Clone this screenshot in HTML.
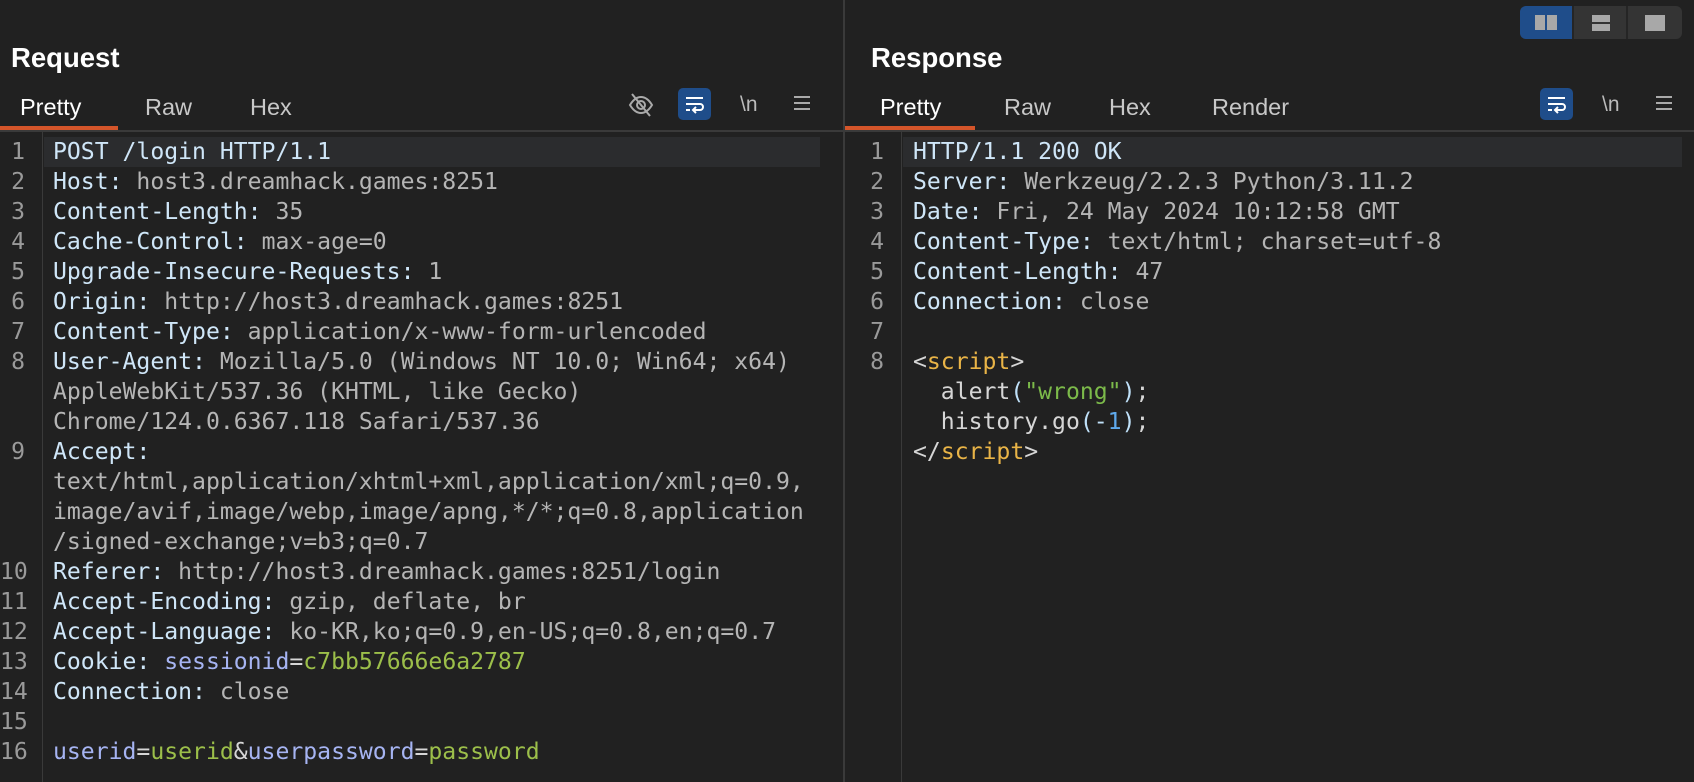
<!DOCTYPE html>
<html><head><meta charset="utf-8"><style>
*{margin:0;padding:0;box-sizing:border-box}
body{width:1694px;height:782px;background:#212121;position:relative;overflow:hidden;font-family:"Liberation Sans",sans-serif}
.a{position:absolute}
.h{font-weight:bold;color:#fff;font-size:27.5px;top:42px}
.tab{font-size:23.5px;color:#c8c8c8;top:94px}
.code{font-family:"DejaVu Sans Mono","Liberation Mono",monospace;font-size:23.1px;white-space:pre;line-height:30px}
.k{color:#cfe6f8}.v{color:#b5b5b5}.p{color:#a6b4f2}.g{color:#9cbf4a}.o{color:#e9b447}.w{color:#d6d6d6}.b{color:#5fa9ec}.lb{color:#bfe0f8}.sg{color:#7cba4a}
.ln{color:#9a9a9a;text-align:right}
</style></head><body>
<div class="a" style="left:843px;top:0;width:2px;height:782px;background:#3a3a3a"></div>
<div class="a" style="left:1520px;top:6px;width:162px;height:33px;border-radius:6px;background:#343434;overflow:hidden">
<div class="a" style="left:0;top:0;width:52px;height:33px;background:#1f4d8a"></div>
<div class="a" style="left:52px;top:0;width:2px;height:33px;background:#252525"></div>
<div class="a" style="left:106px;top:0;width:2px;height:33px;background:#252525"></div>
<div class="a" style="left:15px;top:9px;width:10px;height:15px;background:#a8a8a8"></div>
<div class="a" style="left:27px;top:9px;width:10px;height:15px;background:#a8a8a8"></div>
<div class="a" style="left:72px;top:9px;width:18px;height:7px;background:#a8a8a8"></div>
<div class="a" style="left:72px;top:18px;width:18px;height:7px;background:#a8a8a8"></div>
<div class="a" style="left:125px;top:9px;width:20px;height:16px;background:#a8a8a8"></div>
</div>
<div class="a h" style="left:11px">Request</div>
<div class="a h" style="left:871px">Response</div>
<div class="a tab" style="left:20px;color:#fff">Pretty</div>
<div class="a tab" style="left:145px">Raw</div>
<div class="a tab" style="left:250px">Hex</div>
<div class="a tab" style="left:880px;color:#fff">Pretty</div>
<div class="a tab" style="left:1004px">Raw</div>
<div class="a tab" style="left:1109px">Hex</div>
<div class="a tab" style="left:1212px">Render</div>
<div class="a" style="left:0;top:130px;width:843px;height:2px;background:#3a3a3a"></div>
<div class="a" style="left:845px;top:130px;width:849px;height:2px;background:#3a3a3a"></div>
<div class="a" style="left:0;top:126px;width:118px;height:4px;background:#d4552a"></div>
<div class="a" style="left:845px;top:126px;width:130px;height:4px;background:#d4552a"></div>
<svg class="a" style="left:627px;top:91px" width="28" height="28" viewBox="0 0 28 28" fill="none" stroke="#aaa" stroke-width="2"><path d="M3 14c3-5 7-8 11-8s8 3 11 8c-3 5-7 8-11 8s-8-3-11-8z"/><circle cx="14" cy="14" r="4"/><path d="M5 3l18 22"/></svg>
<div class="a" style="left:678px;top:88px;width:33px;height:32px;border-radius:5px;background:#1f4d8a"></div>
<svg class="a" style="left:683px;top:92px" width="24" height="24" viewBox="0 0 24 24" fill="none" stroke="#fff" stroke-width="2"><path d="M3 6h17M3 12h14a3 3 0 0 1 0 6h-6M3 18h4M13 15l-3 3 3 3"/></svg>
<div class="a" style="left:740px;top:93px;color:#bbb;font-size:21px">\n</div>
<svg class="a" style="left:793px;top:95px" width="18" height="16"><path d="M1 2h16M1 8h16M1 14h16" stroke="#aaa" stroke-width="2"/></svg>
<div class="a" style="left:1540px;top:88px;width:33px;height:32px;border-radius:5px;background:#1f4d8a"></div>
<svg class="a" style="left:1545px;top:92px" width="24" height="24" viewBox="0 0 24 24" fill="none" stroke="#fff" stroke-width="2"><path d="M3 6h17M3 12h14a3 3 0 0 1 0 6h-6M3 18h4M13 15l-3 3 3 3"/></svg>
<div class="a" style="left:1602px;top:93px;color:#bbb;font-size:21px">\n</div>
<svg class="a" style="left:1655px;top:95px" width="18" height="16"><path d="M1 2h16M1 8h16M1 14h16" stroke="#aaa" stroke-width="2"/></svg>
<div class="a" style="left:42px;top:132px;width:1px;height:650px;background:#3a3a3a"></div>
<div class="a" style="left:44px;top:137px;width:776px;height:30px;background:#2b2c2e"></div>
<div class="a code ln" style="left:0;top:137px;width:25px">1
2
3
4
5
6
7
8


9



10
11
12
13
14
15
16</div>
<div class="a code" style="left:53px;top:137px"><span class="k">POST /login HTTP/1.1</span>
<span class="k">Host: </span><span class="v">host3.dreamhack.games:8251</span>
<span class="k">Content-Length: </span><span class="v">35</span>
<span class="k">Cache-Control: </span><span class="v">max-age=0</span>
<span class="k">Upgrade-Insecure-Requests: </span><span class="v">1</span>
<span class="k">Origin: </span><span class="v">http://host3.dreamhack.games:8251</span>
<span class="k">Content-Type: </span><span class="v">application/x-www-form-urlencoded</span>
<span class="k">User-Agent: </span><span class="v">Mozilla/5.0 (Windows NT 10.0; Win64; x64)
AppleWebKit/537.36 (KHTML, like Gecko)
Chrome/124.0.6367.118 Safari/537.36</span>
<span class="k">Accept: </span><span class="v">
text/html,application/xhtml+xml,application/xml;q=0.9,
image/avif,image/webp,image/apng,*/*;q=0.8,application
/signed-exchange;v=b3;q=0.7</span>
<span class="k">Referer: </span><span class="v">http://host3.dreamhack.games:8251/login</span>
<span class="k">Accept-Encoding: </span><span class="v">gzip, deflate, br</span>
<span class="k">Accept-Language: </span><span class="v">ko-KR,ko;q=0.9,en-US;q=0.8,en;q=0.7</span>
<span class="k">Cookie: </span><span class="p">sessionid</span><span class="w">=</span><span class="g">c7bb57666e6a2787</span>
<span class="k">Connection: </span><span class="v">close</span>

<span class="p">userid</span><span class="w">=</span><span class="g">userid</span><span class="w">&amp;</span><span class="p">userpassword</span><span class="w">=</span><span class="g">password</span></div>
<div class="a" style="left:901px;top:132px;width:1px;height:650px;background:#3a3a3a"></div>
<div class="a" style="left:903px;top:137px;width:779px;height:30px;background:#2b2c2e"></div>
<div class="a code ln" style="left:850px;top:137px;width:34px">1
2
3
4
5
6
7
8</div>
<div class="a code" style="left:913px;top:137px"><span class="k">HTTP/1.1 200 OK</span>
<span class="k">Server: </span><span class="v">Werkzeug/2.2.3 Python/3.11.2</span>
<span class="k">Date: </span><span class="v">Fri, 24 May 2024 10:12:58 GMT</span>
<span class="k">Content-Type: </span><span class="v">text/html; charset=utf-8</span>
<span class="k">Content-Length: </span><span class="v">47</span>
<span class="k">Connection: </span><span class="v">close</span>

<span class="w">&lt;</span><span class="o">script</span><span class="w">&gt;</span>
<span class="w">  alert</span><span class="lb">(</span><span class="sg">"wrong"</span><span class="lb">)</span><span class="w">;</span>
<span class="w">  history.go</span><span class="lb">(-</span><span class="b">1</span><span class="lb">)</span><span class="w">;</span>
<span class="w">&lt;/</span><span class="o">script</span><span class="w">&gt;</span></div>
</body></html>
